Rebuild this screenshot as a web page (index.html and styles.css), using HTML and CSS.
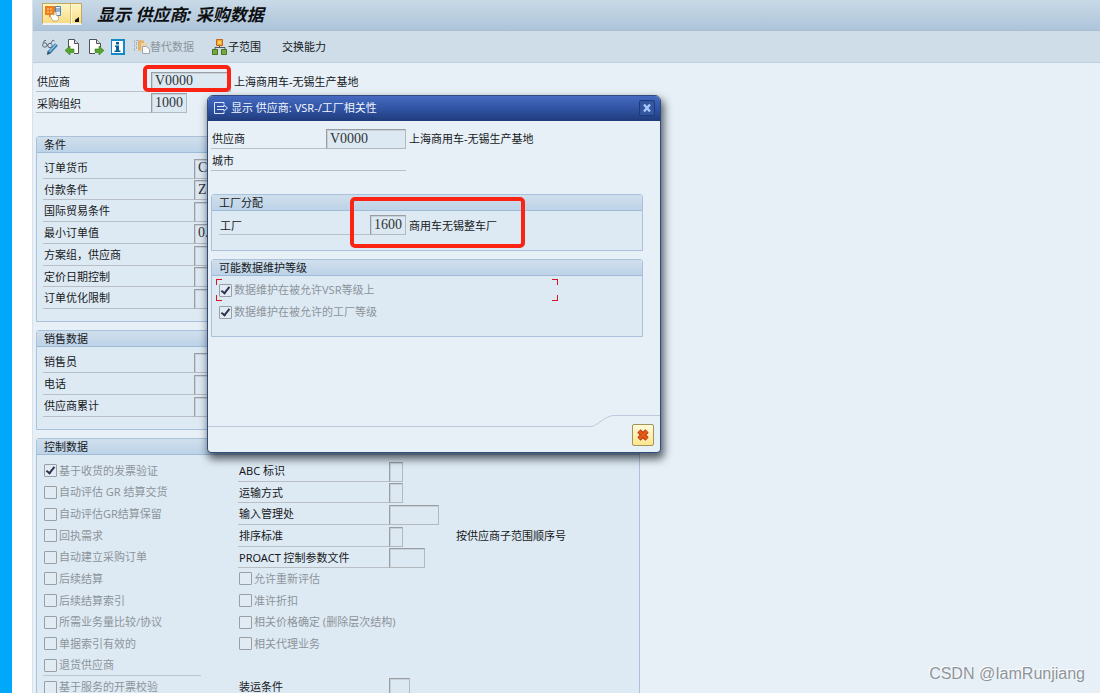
FILE: index.html
```html
<!DOCTYPE html>
<html lang="zh-CN">
<head>
<meta charset="utf-8">
<title>显示 供应商: 采购数据</title>
<link rel="stylesheet" href="styles.css">
</head>
<body>
<div class="desktop">
<main class="app">
  <header class="titlebar">
    <button class="menu-button" type="button" aria-label="菜单">
      <svg width="38" height="20" viewBox="0 0 38 20">
        <path d="M2 2h10v9H8l-2 3v-3H2z" fill="#ee7d1c"/>
        <path d="M4 5h6M4 8h5" stroke="#ffe3a8" stroke-dasharray="2 1"/>
        <path d="M12.500 2.500h5v9h-5z" fill="#e8f2fb" stroke="#4b83b8"/>
        <path d="M14 4v4M16 4v4" stroke="#3d76b0" fill="none"/>
        <path d="M7 12l2-2 2 1V8h2v3l2 1 1 3-2 2h-4z" fill="#fff" stroke="#b98c40" stroke-width=".7"/>
        <path d="M28.500 0v20" stroke="#fffbe0"/><path d="M27.500 0v20" stroke="#d8bd6e"/>
        <path d="M36 13v5h-4v-2z" fill="#111"/>
      </svg>
    </button>
    <h1>显示 供应商: 采购数据</h1>
  </header>
  <nav class="toolbar">
    <div class="tools">
      <button type="button" aria-label="显示/更改">
        <svg width="16" height="16" viewBox="0 0 16 16"><g fill="none" stroke="#596a78"><circle cx="2.800" cy="6" r="2.200"/><circle cx="8" cy="6.500" r="2.200"/><path d="M1 4l2-3 1 1M5 6h1M9 4l2-3 1.500 1"/></g><path d="M7 13.500l7.500-8" stroke="#2f76aa" stroke-width="3.600"/><path d="M7.500 12.500l6.500-7" stroke="#8bc3e4" stroke-width="1.400"/><path d="M5 16l.5-4 3 2.500z" fill="#334c60"/></svg>
      </button>
      <button type="button" aria-label="上一页">
        <svg width="16" height="16" viewBox="0 0 16 16"><path d="M3.500 9V.5h6l4 4v10H9" fill="#fff" stroke="#4e5356"/><path d="M9.500.5v4h4" fill="#ddd" stroke="#4e5356"/><path d="M0 11.500L5 7v3h4v3.500H5V16z" fill="#55a52b" stroke="#35791a" stroke-width=".6"/></svg>
      </button>
      <button type="button" aria-label="下一页">
        <svg width="16" height="16" viewBox="0 0 16 16"><path d="M7 14.500H1.500V.5h7l4 4V8" fill="#fff" stroke="#4e5356"/><path d="M8.500.5v4h4" fill="#ddd" stroke="#4e5356"/><path d="M16 11.500L11 7v3H7v3.500h4V16z" fill="#55a52b" stroke="#35791a" stroke-width=".6"/></svg>
      </button>
      <button type="button" aria-label="信息">
        <svg width="16" height="16" viewBox="0 0 16 16"><path d="M0 1h13v14H0z" fill="#fff" stroke="#1689c9" stroke-width="2"/><path d="M5 3h3v2.500H5zM4 6.500h4v5h1.500V13h-6v-1.500H5V8H4z" fill="#08639f"/></svg>
      </button>
      <button type="button" class="off">
        <svg width="16" height="16" viewBox="0 0 16 16"><path d="M.5 12V1.500H7M2.500 3v8" fill="none" stroke="#a9b6c0" stroke-dasharray="3 1"/><path d="M4 1.500h6v4H8v6H4z" fill="#e6b266"/><path d="M7 4h6v3H9v6H7z" fill="#f0d3a4"/><path d="M8.500 7.500h4l3 2.500v4.500h-7z" fill="#f6f8fa" stroke="#9ba7b1"/></svg>替代数据
      </button>
    </div>
    <button type="button">
      <svg width="16" height="16" viewBox="0 0 16 16"><path d="M7.500 7v2M3 11V8.500h10V11" fill="none" stroke="#555"/><path d="M4.500.5h6v6h-6z" fill="#f5a623" stroke="#c7661e"/><path d="M.5 10.500h5v5h-5zM9.500 10.500h5v5h-5z" fill="#77a842" stroke="#47751f"/><path d="M6 2h3v3H6z" fill="#ffcf61"/></svg>子范围
    </button>
    <button type="button">交换能力</button>
  </nav>

  <div class="form">
    <div class="rows head-rows">
      <div class="row"><label for="vendor">供应商</label><span class="marked"><input id="vendor" class="w80" value="V0000" readonly></span><span class="desc">上海商用车-无锡生产基地</span></div>
      <div class="row"><label for="org">采购组织</label><input id="org" class="w36" value="1000" readonly></div>
    </div>

    <section class="group">
      <h2>条件</h2>
      <div class="rows rows-7">
        <div class="row"><label for="c1">订单货币</label><input id="c1" class="w50" value="CNY" readonly></div>
        <div class="row"><label for="c2">付款条件</label><input id="c2" class="w50" value="Z001" readonly></div>
        <div class="row"><label for="c3">国际贸易条件</label><input id="c3" class="w50" readonly></div>
        <div class="row"><label for="c4">最小订单值</label><input id="c4" class="w80" value="0.00" readonly></div>
        <div class="row"><label for="c5">方案组，供应商</label><input id="c5" class="w36" readonly></div>
        <div class="row"><label for="c6">定价日期控制</label><input id="c6" class="w36" readonly></div>
        <div class="row"><label for="c7">订单优化限制</label><input id="c7" class="w36" readonly></div>
      </div>
    </section>

    <section class="group">
      <h2>销售数据</h2>
      <div class="rows rows-3">
        <div class="row"><label for="s1">销售员</label><input id="s1" class="w80" readonly></div>
        <div class="row"><label for="s2">电话</label><input id="s2" class="w80" readonly></div>
        <div class="row"><label for="s3">供应商累计</label><input id="s3" class="w80" readonly></div>
      </div>
    </section>

    <section class="group">
      <h2>控制数据</h2>
      <div class="columns">
        <div class="rows rows-11">
          <label class="check"><input type="checkbox" checked disabled>基于收货的发票验证</label>
          <label class="check"><input type="checkbox" disabled>自动评估 GR 结算交货</label>
          <label class="check"><input type="checkbox" disabled>自动评估GR结算保留</label>
          <label class="check"><input type="checkbox" disabled>回执需求</label>
          <label class="check"><input type="checkbox" disabled>自动建立采购订单</label>
          <label class="check"><input type="checkbox" disabled>后续结算</label>
          <label class="check"><input type="checkbox" disabled>后续结算索引</label>
          <label class="check"><input type="checkbox" disabled>所需业务量比较/协议</label>
          <label class="check"><input type="checkbox" disabled>单据索引有效的</label>
          <label class="check ruled"><input type="checkbox" disabled>退货供应商</label>
          <label class="check"><input type="checkbox" disabled>基于服务的开票校验</label>
        </div>
        <div class="rows rows-11">
          <div class="row"><label for="k1">ABC 标识</label><input id="k1" class="w14" readonly></div>
          <div class="row"><label for="k2">运输方式</label><input id="k2" class="w14" readonly></div>
          <div class="row"><label for="k3">输入管理处</label><input id="k3" class="w50" readonly></div>
          <div class="row"><label for="k4">排序标准</label><input id="k4" class="w14" readonly><span class="note">按供应商子范围顺序号</span></div>
          <div class="row"><label for="k5">PROACT 控制参数文件</label><input id="k5" class="w36" readonly></div>
          <label class="check"><input type="checkbox" disabled>允许重新评估</label>
          <label class="check"><input type="checkbox" disabled>准许折扣</label>
          <label class="check"><input type="checkbox" disabled>相关价格确定 (删除层次结构)</label>
          <label class="check"><input type="checkbox" disabled>相关代理业务</label>
          <div></div>
          <div class="row"><label for="k6">装运条件</label><input id="k6" class="w21" readonly></div>
        </div>
      </div>
    </section>
  </div>
</main>

<div class="dialog" role="dialog" aria-labelledby="dialog-title">
  <div class="dialog-title">
    <svg width="16" height="12" viewBox="0 0 16 12" fill="none" stroke="#dce8ff"><path d="M11 2.500V.5H1.500v11H11v-2M4 4.500h7V3l3.500 3L11 9V7.500H4"/></svg>
    <h2 id="dialog-title">显示 供应商: VSR-/工厂相关性</h2>
    <button type="button" aria-label="关闭"><svg width="10" height="10" viewBox="0 0 10 10"><path d="M2 1.500l6 7M8 1.500l-6 7" stroke="#a9c8ff" stroke-width="2.400"/></svg></button>
  </div>
  <div class="dialog-body">
    <div class="rows dialog-rows">
      <div class="row"><label for="d1">供应商</label><input id="d1" class="w80" value="V0000" readonly><span class="desc">上海商用车-无锡生产基地</span></div>
      <div class="row"><span class="caption">城市</span></div>
    </div>
    <section class="group plant">
      <h2>工厂分配</h2>
      <div class="row"><label for="d2">工厂</label><span class="marked marked-plant"><input id="d2" class="w36" value="1600" readonly><span class="desc">商用车无锡整车厂</span></span></div>
    </section>
    <section class="group levels">
      <h2>可能数据维护等级</h2>
      <div class="rows">
        <label class="check focus"><input type="checkbox" checked disabled>数据维护在被允许VSR等级上<i></i></label>
        <label class="check"><input type="checkbox" checked disabled>数据维护在被允许的工厂等级</label>
      </div>
    </section>
  </div>
  <div class="dialog-foot">
    <span class="foot-line"></span>
    <svg width="26" height="12" viewBox="0 0 26 12" fill="none" stroke="#bccadb"><path d="M0 11.500c5 0 6-2 12-6S20 .5 26 .5"/></svg>
    <div class="foot-tab">
      <button type="button" aria-label="取消"><svg width="14" height="14" viewBox="0 0 14 14"><path d="M3 3l8 8M11 3l-8 8" stroke="#a8341c" stroke-width="4.600"/><path d="M3 3l8 8M11 3l-8 8" stroke="#e45b13" stroke-width="3"/></svg></button>
    </div>
  </div>
</div>
<p class="watermark">CSDN @IamRunjiang</p>
</div>
</body>
</html>
```
FILE: styles.css
```css
* { box-sizing: border-box; }
body {
  margin: 0;
  background: #fff;
  color: #16191c;
  font: 11px/16px "Noto Sans", "Noto Sans CJK SC", sans-serif;
}
h1, h2, p { margin: 0; font-weight: normal; }
button, input { font: inherit; color: inherit; margin: 0; }
button { border: 0; padding: 0; background: none; }
svg { flex: none; display: block; }

.desktop {
  position: relative;
  height: 100vh;
  overflow: hidden;
  padding-left: 20px;
  border-left: 12px solid #00a8fa;
}
.app {
  min-height: 100%;
  border-left: 1px solid #dae1ec;
  background: #e8f0f7;
}

/* Title bar and toolbar */
.titlebar {
  display: flex;
  align-items: center;
  gap: 15px;
  height: 31px;
  padding-left: 9px;
  border-bottom: 1px solid #a9bfd4;
  background: linear-gradient(#c9dae7, #b9cddf 60%, #adc4da);
}
.titlebar h1 {
  font: italic bold 17px/24px "Noto Sans", "Noto Sans CJK SC", sans-serif;
  color: #0c0e10;
}
.menu-button {
  height: 22px;
  margin-bottom: 2px;
  border: 1px solid #c2a962;
  border-bottom: 2px solid #eff4f8;
  background: linear-gradient(#fff5c4, #f7dc86);
}
.toolbar {
  display: flex;
  align-items: center;
  gap: 21px;
  height: 32px;
  padding-left: 9px;
  border-bottom: 1px solid #bfceda;
  background: #cfdde8;
}
.toolbar button { display: flex; align-items: center; }
.toolbar .off { color: #8b959d; }
.tools { display: flex; gap: 7px; margin-right: -3px; }

/* Form rows */
.form { padding: 7px 0 0 3px; }
.rows { display: grid; grid-auto-rows: 1fr; }
.row { display: flex; align-items: stretch; min-height: 21px; }
.row > label, .caption {
  flex: none;
  width: 151px;
  padding: 3px 0 0 1px;
  border-bottom: 1px solid #b9bfc4;
}
.row input {
  flex: none;
  height: 20px;
  align-self: end;
  padding: 0 3px 1px;
  border: 1px solid #b4b9be;
  border-top-color: #999ea4;
  border-left-color: #999ea4;
  border-radius: 0;
  background: #dde9f2;
  box-shadow: inset 1px 1px 0 #c9d1d8;
  font: 14px/16px "Liberation Serif", serif;
  color: #303438;
  outline: 0;
}
.w14 { width: 14px; }
.w21 { width: 21px; }
.w36 { width: 36px; }
.w50 { width: 50px; }
.w80 { width: 80px; }
.desc { padding: 3px 0 0 3px; }
.note { padding: 3px 0 0 53px; }

.head-rows { min-height: 43px; margin-bottom: 23px; }
.head-rows .row > label { width: 115px; }
.head-rows .row > label, .head-rows .desc,
.dialog-rows .row > label, .dialog-rows .caption, .dialog-body .desc,
.plant .row > label { padding-top: 4px; }
.marked { position: relative; display: flex; }
.marked::after {
  content: "";
  position: absolute;
  inset: -5px 0 0 -8px;
  border: 4px solid #fb2314;
  border-radius: 5px;
}

.group {
  width: 604px;
  margin-bottom: 8px;
  padding-bottom: 12px;
  border: 1px solid #a9c1da;
  border-radius: 3px 3px 0 0;
  background: #deeaf3;
}
.group h2 {
  height: 16px;
  margin-bottom: 4px;
  padding-left: 7px;
  border-bottom: 1px solid #9fbbd7;
  background: linear-gradient(#d0dfec, #bdd3e8);
  font-size: 11px;
  line-height: 15px;
}
.group .rows { padding-left: 6px; }
.rows-7 { min-height: 152px; }
.rows-3 { min-height: 66px; }
.rows-11 { min-height: 238px; }
.columns {
  display: grid;
  grid-template-columns: 164px 1fr;
  gap: 31px;
  padding-top: 1px;
}

/* Tick boxes */
.check {
  display: flex;
  align-items: center;
  gap: 2px;
  padding-left: 1px;
  color: #8c949b;
}
.check input {
  appearance: none;
  width: 13px;
  height: 13px;
  border: 1px solid #9a9fa5;
  border-radius: 1px;
  background: #e1ebf3;
}
.check input:checked::before {
  content: "";
  display: block;
  width: 5px;
  height: 9px;
  margin: 0 0 0 3px;
  border: solid #30324e;
  border-width: 0 2px 2px 0;
  box-sizing: border-box;
  transform: rotate(38deg);
}
.ruled { border-bottom: 1px solid #b9c8c9; }

/* Dialog window */
.dialog {
  position: absolute;
  left: 195px;
  top: 95px;
  width: 454px;
  border: 1px solid #2f4a7c;
  border-radius: 6px 6px 4px 4px;
  background: #e8f0f7;
  box-shadow: 2px 5px 8px 1px rgba(20, 28, 38, .7);
}
.dialog-title {
  display: flex;
  align-items: center;
  gap: 2px;
  height: 25px;
  padding: 0 5px 2px;
  border-radius: 5px 5px 0 0;
  background: linear-gradient(#456ac0, #2f51a0 55%, #1f3b7b);
  color: #f0f5ff;
}
.dialog-title h2 { flex: 1; font-size: 11px; }
.dialog-title button {
  display: grid;
  place-items: center;
  width: 16px;
  height: 16px;
  border: 1px solid #1d3a7c;
  border-radius: 2px;
  background: #32569f;
}
.dialog-body { padding: 6px 17px 0 3px; }
.dialog-rows { min-height: 44px; margin-bottom: 23px; }
.dialog-rows .row > label { width: 115px; }
.dialog-rows .caption { width: 195px; }
.dialog .group { width: auto; }
.dialog .group h2 { margin-bottom: 3px; }
.plant { padding-bottom: 15px; }
.plant .row { padding-left: 7px; }
.marked-plant::after { inset: -17px -28px -13px -20px; }
.levels .rows { min-height: 44px; padding-left: 5px; }
.dialog .levels { padding-bottom: 13px; margin-bottom: 78px; }
.levels .check { margin-right: 84px; padding-left: 2px; }
.focus { position: relative; }
.focus::before, .focus::after, .focus i::before, .focus i::after {
  content: "";
  position: absolute;
  width: 5px;
  height: 5px;
  border: 0 solid #dc1420;
}
.focus::before { left: -1px; top: 0; border-width: 1px 0 0 1px; }
.focus::after { left: -1px; bottom: 0; border-width: 0 0 1px 1px; }
.focus i::before { right: 0; top: 0; border-width: 1px 1px 0 0; }
.focus i::after { right: 0; bottom: 0; border-width: 0 1px 1px 0; }
.dialog-foot { display: flex; }
.foot-line { flex: 1; height: 12px; border-bottom: 1px solid #bccadb; }
.foot-tab {
  display: flex;
  justify-content: flex-end;
  width: 44px;
  padding: 8px 6px 6px;
  border-top: 1px solid #bccadb;
}
.foot-tab button {
  display: grid;
  place-items: center;
  width: 22px;
  height: 22px;
  border: 1px solid #a3935c;
  border-radius: 2px;
  background: linear-gradient(#fffbd8, #fde58e);
}

.watermark {
  position: absolute;
  right: 15px;
  bottom: 8px;
  font: 16px/22px "Liberation Sans", sans-serif;
  color: #8f959a;
  text-shadow: -1px -1px 0 #fff;
}
```
